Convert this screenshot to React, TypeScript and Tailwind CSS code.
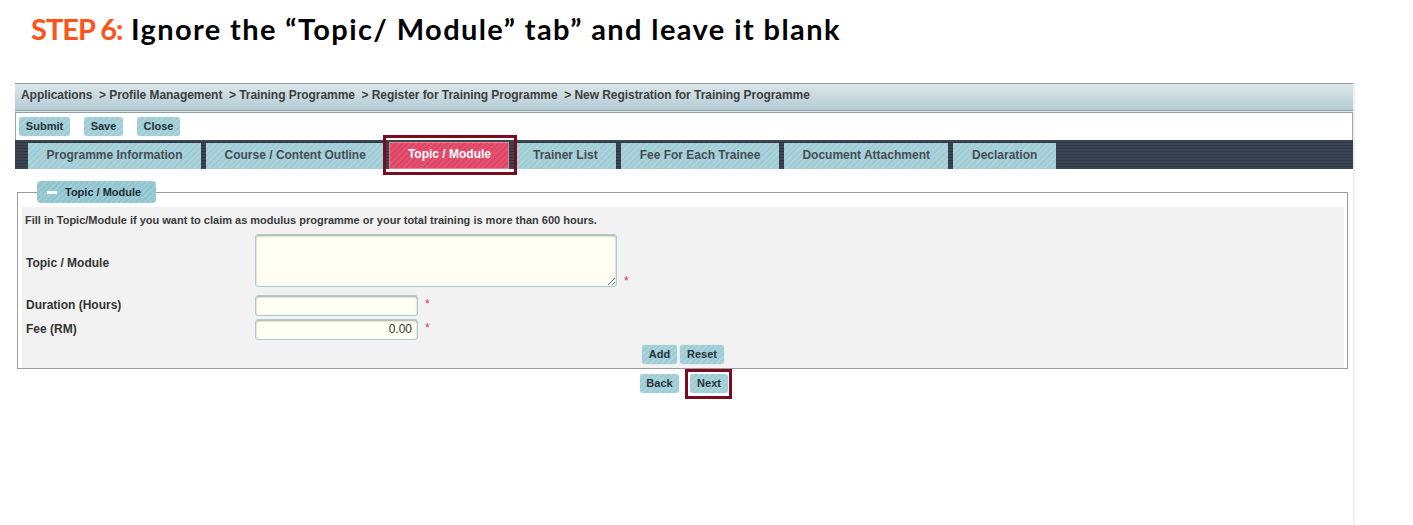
const hatch =
  'bg-[repeating-linear-gradient(135deg,#9fcbd4_0px,#9fcbd4_2px,#aad3db_2px,#aad3db_4px)]'

function Btn({ label, w }: { label: string; w: string }) {
  return (
    <button
      className={`${w} h-[19px] rounded-[3px] ${hatch} text-[11px] font-bold leading-none text-[#24323a] shadow-[0_0_1px_rgba(0,0,0,0.25)]`}
    >
      {label}
    </button>
  )
}

const tabs = [
  'Programme Information',
  'Course / Content Outline',
  'Topic / Module',
  'Trainer List',
  'Fee For Each Trainee',
  'Document Attachment',
  'Declaration',
]

function Req() {
  return <span className="ml-[7px] text-[12px] text-[#e0364f]">*</span>
}

export default function App() {
  return (
    <div className="relative h-[525px] w-[1413px] overflow-hidden bg-white font-['Liberation_Sans',Arial,sans-serif]">
      <h1 className="pl-[31px] pt-[11px] font-['Lato',sans-serif] text-[29px] font-bold leading-[36px] tracking-[1.4px] text-black">
        <span className="tracking-[-1px] text-[#ff5319]">STEP 6:</span> Ignore the “Topic/ Module” tab” and leave it blank
      </h1>

      <div className="mt-[36px] ml-[15px] flex w-[1341px]">
        <div className="w-[1338px]">
          {/* breadcrumb */}
          <div className="flex h-[30px] items-start border-t border-[#8e9ea3] border-b-[3px] border-double border-b-[#8fa2a8] bg-[linear-gradient(#dbe7eb,#b4cbd2)] pl-[6px] pt-[2px] text-[12px] font-bold tracking-[-0.05px] text-[#3b3f42]">
            Applications&nbsp; &gt; Profile Management&nbsp; &gt; Training Programme&nbsp; &gt; Register for Training Programme&nbsp; &gt; New Registration for Training Programme
          </div>

          {/* toolbar */}
          <div className="flex h-[27px] items-center gap-[14px] border-x border-[#a5a5a5] pl-[3px]">
            <Btn label="Submit" w="w-[51px]" />
            <Btn label="Save" w="w-[39px]" />
            <Btn label="Close" w="w-[43px]" />
          </div>

          {/* tabs */}
          <div className="flex h-[29px] items-end gap-[5px] bg-[repeating-linear-gradient(0deg,#3c4553_0px,#3c4553_2px,#2e3643_2px,#2e3643_3px)] pl-[13px]">
            {tabs.map((t) =>
              t === 'Topic / Module' ? (
                <div
                  key={t}
                  className="relative flex h-[27px] items-center border border-[#f27d93] bg-[repeating-linear-gradient(135deg,#de4567_0px,#de4567_2px,#e3536f_2px,#e3536f_4px)] px-[17.5px] pb-[3px] text-[12px] font-bold text-white"
                >
                  {t}
                  <div className="pointer-events-none absolute -top-[8px] -left-[7px] h-[40px] w-[134px] border-[3px] border-[#790d1f]" />
                </div>
              ) : (
                <div
                  key={t}
                  className={`flex h-[26px] items-center ${hatch} px-[18.5px] pb-[2px] text-[12px] font-bold text-[#464d52]`}
                >
                  {t}
                </div>
              ),
            )}
          </div>

          {/* fieldset */}
          <fieldset className="mt-[12px] ml-[2px] w-[1331px] border border-[#9a9a9a] pr-[3px] pl-[4px] pb-0">
            <legend className="ml-[15px] flex h-[22px] w-[119px] items-center gap-[8px] rounded-[4px] bg-[repeating-linear-gradient(135deg,#8fc3cd_0px,#8fc3cd_2px,#9fcdd6_2px,#9fcdd6_4px)] pl-[10px] text-[11px] font-bold text-[#1f2a30]">
              <span className="h-[3px] w-[10px] bg-white" />
              Topic / Module
            </legend>
            <div className="mt-[4px] bg-[#f2f2f2] pb-[4px]">
              <div className="px-[3px] pt-[5px] text-[11px] font-bold text-[#3a3a3a]">
                Fill in Topic/Module if you want to claim as modulus programme or your total training is more than 600 hours.
              </div>
              <div className="mt-[5px] flex items-center pl-[4px]">
                <div className="w-[229px] pt-[6px] text-[12px] font-bold text-[#333]">Topic / Module</div>
                <div className="flex items-end">
                  <textarea className="h-[53px] w-[362px] rounded-[3px] border border-[#a9ccd4] bg-[#fefff2] shadow-[inset_0_1px_2px_rgba(0,0,0,0.35)] outline-none" />
                  <span className="mb-[-5px]">
                    <Req />
                  </span>
                </div>
              </div>
              <div className="mt-[8px] flex items-center pl-[4px]">
                <div className="w-[229px] text-[12px] font-bold text-[#333]">Duration (Hours)</div>
                <input className="h-[21px] w-[163px] rounded-[3px] border border-[#a9ccd4] bg-[#fefff2] shadow-[inset_0_1px_2px_rgba(0,0,0,0.35)] outline-none" />
                <span className="-mt-[4px]">
                  <Req />
                </span>
              </div>
              <div className="mt-[3px] flex items-center pl-[4px]">
                <div className="w-[229px] text-[12px] font-bold text-[#333]">Fee (RM)</div>
                <input
                  readOnly
                  value="0.00"
                  className="h-[21px] w-[163px] rounded-[3px] border border-[#a9ccd4] bg-[#fefff2] pr-[5px] text-right text-[12px] text-[#333] shadow-[inset_0_1px_2px_rgba(0,0,0,0.35)] outline-none"
                />
                <span className="-mt-[4px]">
                  <Req />
                </span>
              </div>
              <div className="mt-[5px] flex justify-center gap-[3px]">
                <Btn label="Add" w="w-[35px]" />
                <Btn label="Reset" w="w-[44px]" />
              </div>
            </div>
          </fieldset>

          <div className="mt-[5px] flex items-start justify-center gap-[11px]">
            <Btn label="Back" w="w-[39px]" />
            <div className="relative flex">
              <Btn label="Next" w="w-[38px]" />
              <div className="pointer-events-none absolute -top-[5px] -left-[5px] h-[30px] w-[47px] border-[3px] border-[#790d1f]" />
            </div>
          </div>
        </div>
        <div className="h-[442px] w-[2px] bg-[#efefef]" />
      </div>
    </div>
  )
}
